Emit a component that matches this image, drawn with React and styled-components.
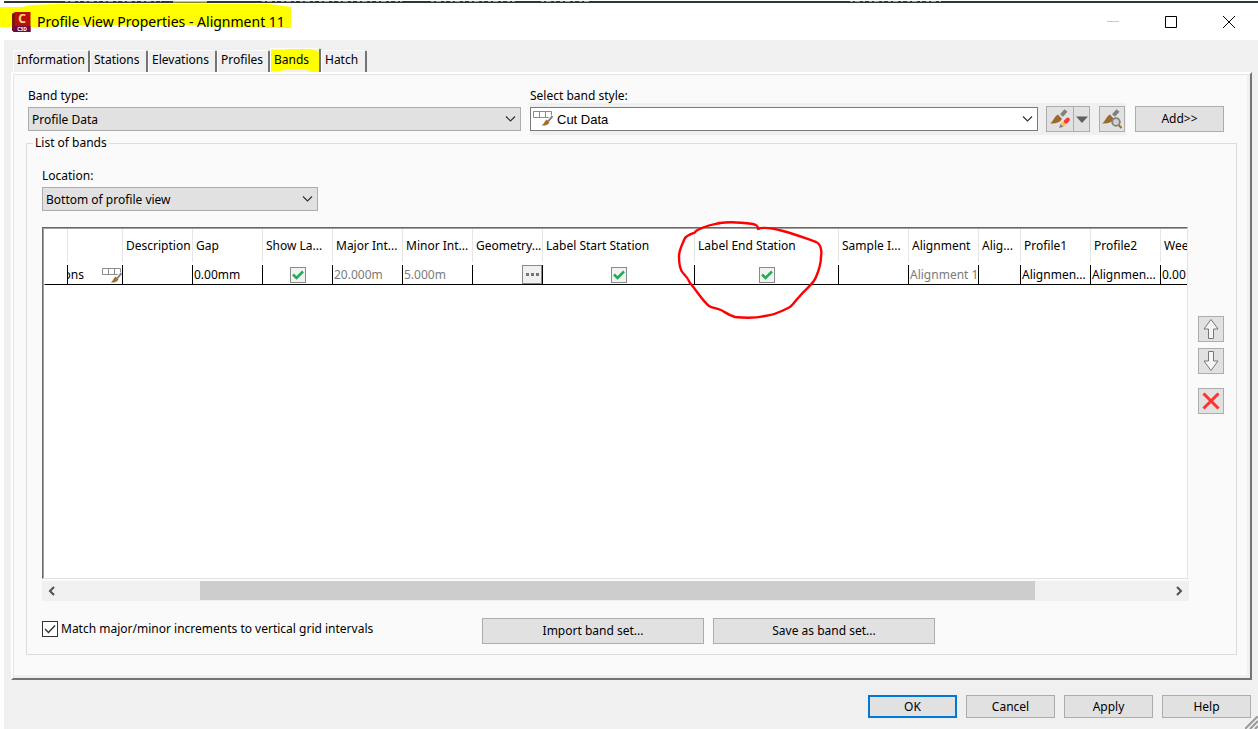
import { useState } from "react";
import styled, { createGlobalStyle } from "styled-components";

const GlobalStyle = createGlobalStyle`
  * {
    box-sizing: border-box;
  }

  body {
    margin: 0;
    background-color: #ffffff;
    color: #000000;
    font-family: "Noto Sans", "Open Sans", sans-serif;
    font-size: 12px;
    line-height: 16px;
  }

  button, select, input {
    font: inherit;
    color: inherit;
    margin: 0;
  }
`;

const Window = styled.div`
  min-height: 100vh;
  display: flex;
  flex-direction: column;
  padding: 1px 0 0 4px;
`;

const Backdrop = styled.svg`
  display: block;
  width: 100%;
  height: 2px;
  background-color: #2b3639;
`;

const TitleBar = styled.header`
  height: 37px;
  display: flex;
  align-items: center;
  position: relative;
  padding-left: 8px;
`;

const TitleMarker = styled.svg`
  position: absolute;
  left: -4px;
  top: 0;
`;

const TitleIcon = styled.svg`
  position: relative;
  margin-right: 6px;
  overflow: visible;
`;

const Title = styled.h1`
  position: relative;
  flex: 1;
  margin: 0;
  font-size: 14px;
  line-height: 20px;
  font-weight: 400;
`;

const CaptionButton = styled.button`
  width: 58px;
  height: 36px;
  padding: 0;
  border: none;
  background: none;
  display: flex;
  align-items: center;
  justify-content: center;
`;

const Body = styled.main`
  flex: 1;
  display: flex;
  flex-direction: column;
  padding: 8px 6px 0 7px;
  background-color: #f0f0f0;
`;

const Tabs = styled.div`
  display: flex;
  align-items: flex-end;
  height: 24px;
  padding-left: 2px;
`;

const Tab = styled.button`
  position: relative;
  width: ${({ $width }) => $width}px;
  height: ${({ $active }) => ($active ? 24 : 22)}px;
  padding: 0 0 ${({ $active }) => ($active ? 2 : 4)}px 3px;
  text-align: left;
  white-space: nowrap;
  background-color: #f0f0f0;
  border: 1px solid #ffffff;
  border-right: 2px solid #747474;
  border-bottom: none;
  border-radius: 2px 2px 0 0;
`;

const TabMarker = styled.svg`
  position: absolute;
  left: 0;
  top: 0;
`;

const TabText = styled.span`
  position: relative;
`;

const Panel = styled.section`
  flex: 1;
  display: flex;
  flex-direction: column;
  padding: 14px 13px 23px;
  background-color: #fafafa;
  border: 2px solid #ffffff;
  border-right-color: #747474;
  border-bottom-color: #747474;
  box-shadow: inset 1px 1px 0 #e6e6e6, inset -3px -3px 0 #f0f0f0;
`;

const FormRow = styled.div`
  display: flex;
  align-items: flex-end;
  gap: 9px;
  padding: 0 13px 0 2px;
`;

const Field = styled.div`
  flex: ${({ $grow }) => $grow || 0} 1 0;
  min-width: 0;
`;

const FieldLabel = styled.label`
  display: block;
  line-height: 15px;
`;

const Controls = styled.div`
  display: flex;
  align-items: center;
  height: 32px;
  padding-right: ${({ $shaded }) => ($shaded ? 1 : 0)}px;
  background-color: ${({ $shaded }) => ($shaded ? "#f0f0f0" : "transparent")};
`;

const Combo = styled.div`
  display: grid;
  flex: ${({ $width }) => ($width ? "none" : 1)};
  width: ${({ $width }) => ($width ? `${$width}px` : "auto")};
  min-width: 0;
  height: 24px;
  align-items: center;

  > * {
    grid-area: 1 / 1;
  }

  > svg {
    pointer-events: none;
  }
`;

const Select = styled.select`
  appearance: none;
  width: 100%;
  height: 24px;
  padding: 2px 24px 0 ${({ $icon }) => ($icon ? 26 : 3)}px;
  border: 1px solid ${({ $icon }) => ($icon ? "#7a7a7a" : "#adadad")};
  border-radius: 0;
  background-color: ${({ $icon }) => ($icon ? "#ffffff" : "#e1e1e1")};
  font-family: ${({ $icon }) => ($icon ? '"Liberation Sans", sans-serif' : "inherit")};
  font-size: ${({ $icon }) => ($icon ? 13 : 12)}px;
`;

const Chevron = styled.svg`
  justify-self: end;
  margin-right: 5px;
`;

const ComboIcon = styled.span`
  z-index: 1;
  display: flex;
  padding: 0 0 2px 3px;
  pointer-events: none;
`;

const Button = styled.button`
  width: ${({ $width }) => $width}px;
  height: ${({ $small }) => ($small ? 23 : 26)}px;
  padding: 0;
  border: ${({ $primary }) => ($primary ? "2px solid #0078d7" : "1px solid #adadad")};
  background-color: #e1e1e1;
  display: flex;
  align-items: center;
  justify-content: center;
`;

const SplitButton = styled.div`
  display: flex;
  margin: 0 9px 0 8px;

  button + button {
    border-left: none;
  }
`;

const Group = styled.fieldset`
  min-width: 0;
  margin: 0;
  padding: 17px 12px 10px 15px;
  border: 1px solid #dcdcdc;
`;

const Legend = styled.legend`
  margin-left: -9px;
  padding: 0 2px;
`;

const LocationField = styled.div`
  display: flex;
  flex-direction: column;
  gap: 3px;
  margin-bottom: 16px;
`;

const ListArea = styled.div`
  display: flex;
  gap: 9px;
`;

const ListColumn = styled.div`
  flex: 1;
  min-width: 0;
  display: flex;
  flex-direction: column;
  gap: 2px;
  position: relative;
`;

const ListBox = styled.div`
  min-height: 352px;
  margin-right: 1px;
  padding: 1px 0 0 1px;
  overflow: hidden;
  background-color: #ffffff;
  border: 1px solid #696969;
  border-right-color: #e3e3e3;
  border-bottom-color: #e3e3e3;
  box-shadow: inset 1px 1px 0 #a0a0a0;
`;

const Table = styled.table`
  table-layout: fixed;
  width: 1186px;
  border-spacing: 0;
`;

const HeadCell = styled.th`
  padding: 0 0 3px;
  font-weight: 400;
  text-align: left;
`;

const HeadText = styled.div`
  height: 33px;
  padding-left: 3px;
  line-height: 33px;
  white-space: nowrap;
  overflow: hidden;
  border-left: 1px solid ${({ $first }) => ($first ? "transparent" : "#e5e5e5")};
`;

const Cell = styled.td`
  height: 20px;
  padding: 0 0 0 ${({ $flush }) => ($flush ? 0 : 1)}px;
  overflow: hidden;
  white-space: nowrap;
  line-height: 19px;
  color: ${({ $muted }) => ($muted ? "#7b7b7b" : "#000000")};
  border-left: 1px solid ${({ $first }) => ($first ? "transparent" : "#000000")};
  border-bottom: 1px solid #000000;
`;

const CellFlex = styled.div`
  display: flex;
  align-items: center;
  justify-content: ${({ $justify }) => $justify};
  height: 19px;
`;

const ClippedText = styled.span`
  display: flex;
  justify-content: flex-end;
  width: 16px;
  overflow: hidden;
`;

const MoreButton = styled.button`
  width: 20px;
  height: 19px;
  padding: 0;
  display: flex;
  align-items: center;
  justify-content: center;
  border: 1px solid #8a8a8a;
  background-color: #f0f0f0;
`;

const Tick = styled.span`
  display: inline-grid;
  place-items: center;

  > * {
    grid-area: 1 / 1;
  }

  > svg {
    pointer-events: none;
    visibility: hidden;
  }

  > input:checked + svg {
    visibility: visible;
  }
`;

const TickInput = styled.input`
  appearance: none;
  width: 16px;
  height: 16px;
  border: 1px solid ${({ $green }) => ($green ? "#8a8a8a" : "#333333")};
  background-color: ${({ $green }) => ($green ? "#f2f2f2" : "#ffffff")};
`;

const RedCircle = styled.svg`
  position: absolute;
  left: 634px;
  top: -9px;
  pointer-events: none;
`;

const Scrollbar = styled.div`
  display: flex;
  height: 20px;
  background-color: #f0f0f0;
`;

const ScrollButton = styled.button`
  width: 19px;
  padding: 0;
  border: none;
  background: none;
  display: flex;
  align-items: center;
  justify-content: center;
`;

const ScrollPart = styled.div`
  flex: ${({ $grow }) => $grow};
  height: 19px;
  background-color: ${({ $thumb }) => ($thumb ? "#cdcdcd" : "transparent")};
`;

const SideButtons = styled.div`
  display: flex;
  flex-direction: column;
  gap: 6px;
  padding-top: 89px;

  button:last-child {
    margin-top: 8px;
  }
`;

const GroupFooter = styled.div`
  display: flex;
  gap: 9px;
  margin-top: 17px;
`;

const CheckLabel = styled.label`
  width: 431px;
  height: 22px;
  display: flex;
  align-items: center;
  gap: 3px;
`;

const Footer = styled.footer`
  position: relative;
  display: flex;
  justify-content: flex-end;
  gap: 9px;
  padding: 15px 1px 11px 0;
`;

const Grip = styled.svg`
  position: absolute;
  right: -6px;
  bottom: 0;
`;

const ChevronIcon = () => (
  <Chevron width="11" height="8" viewBox="0 0 11 8" fill="none" stroke="#333" strokeWidth="1.2">
    <path d="M1 1.500 5.500 6 10 1.500" />
  </Chevron>
);

const BandIcon = () => (
  <svg width="20" height="16" viewBox="0 0 20 16" fill="none">
    <path d="M.5 1.500h18v6H.5zM6.500 1.500v6M12.500 1.500v6" stroke="#8c8c8c" />
    <path d="M19.500 6 15.500 11" stroke="#fff" strokeWidth="4" />
    <path d="M19.500 6 15.500 11" stroke="#7d7d7d" strokeWidth="2" />
    <path d="M13.500 9.500 16.500 12C15.500 15 12 16 8.500 15.500 11 14.500 11.500 11 13.500 9.500Z" fill="#a0702c" />
  </svg>
);

const Brush = () => (
  <>
    <path d="M16 1.500 11.500 6.500" stroke="#808080" strokeWidth="4" />
    <path d="M8 5.500 12 10C9.500 14 5 15 0 14.500 3.500 12.500 3.500 8 8 5.500Z" fill="#9b6a2c" />
  </>
);

const EditBrushIcon = () => (
  <svg width="20" height="20" viewBox="0 0 20 20" fill="none">
    <Brush />
    <path d="m12 16.500 5-5" stroke="#ffc04a" strokeWidth="4" />
    <path d="m16 12.500 1.800-1.800" stroke="#f33" strokeWidth="4" strokeLinecap="round" />
    <path d="m10.500 15 2.800 2.800L9 19Z" fill="#808080" />
  </svg>
);

const FindBrushIcon = () => (
  <svg width="20" height="20" viewBox="0 0 20 20" fill="none">
    <Brush />
    <path d="m16.500 16 3 3" stroke="#a0702c" strokeWidth="2" />
    <circle cx="14" cy="13" r="3.800" fill="#d2d2d2" stroke="#808080" strokeWidth="1.800" />
  </svg>
);

const ArrowIcon = ({ down }) => (
  <svg width="18" height="22" viewBox="0 0 18 22" fill="#f5f5f5" stroke="#777">
    <path
      d={down
        ? "M6.500 1.500h5v9.500h4.500L9 20.500 2 11h4.500Z"
        : "M6.500 20.500h5V11h4.500L9 1.500 2 11h4.500Z"}
    />
  </svg>
);

const AppIcon = () => (
  <TitleIcon width="19" height="20" viewBox="0 0 19 20">
    <path d="M0 2 3 0h15.500v20H2L0 18Z" fill="#b80f0a" />
    <path d="M0 2 3 1v19H2L0 18Z" fill="#82100c" />
    <path d="M2 14h16.500v6H2L0 18Z" fill="#6b0a46" />
    <text x="10" y="11" textAnchor="middle" fontSize="12" fontWeight="700" fill="#ffe36a">C</text>
    <text x="10" y="19" textAnchor="middle" fontSize="5" fontWeight="700" fill="#fff">C3D</text>
  </TitleIcon>
);

const GreenTick = ({ label }) => (
  <CellFlex $justify="center">
    <Tick>
      <TickInput $green type="checkbox" defaultChecked aria-label={label} />
      <svg width="12" height="10" viewBox="0 0 12 10" fill="none" stroke="#1eae54" strokeWidth="2.500">
        <path d="m1 4.500 3.500 3.500L11 1.500" />
      </svg>
    </Tick>
  </CellFlex>
);

const tabs = [
  { name: "Information", width: 77 },
  { name: "Stations", width: 58 },
  { name: "Elevations", width: 69 },
  { name: "Profiles", width: 53 },
  { name: "Bands", width: 51 },
  { name: "Hatch", width: 46 },
];

const columns = [
  { name: "", width: 23 },
  { name: "", width: 55 },
  { name: "Description", width: 70 },
  { name: "Gap", width: 70 },
  { name: "Show La...", width: 70 },
  { name: "Major Int...", width: 70 },
  { name: "Minor Int...", width: 70 },
  { name: "Geometry...", width: 70 },
  { name: "Label Start Station", width: 152 },
  { name: "Label End Station", width: 144 },
  { name: "Sample I...", width: 70 },
  { name: "Alignment", width: 70 },
  { name: "Alig...", width: 42 },
  { name: "Profile1", width: 70 },
  { name: "Profile2", width: 70 },
  { name: "Wee", width: 70 },
];

const BandTable = () => (
  <Table>
    <colgroup>
      {columns.map((column, i) => (
        <col key={i} width={column.width} />
      ))}
    </colgroup>
    <thead>
      <tr>
        {columns.map((column, i) => (
          <HeadCell key={i}>
            <HeadText $first={i === 0}>{column.name}</HeadText>
          </HeadCell>
        ))}
      </tr>
    </thead>
    <tbody>
      <tr>
        <Cell $first />
        <Cell $flush>
          <CellFlex $justify="space-between">
            <ClippedText>ons</ClippedText>
            <BandIcon />
          </CellFlex>
        </Cell>
        <Cell />
        <Cell>0.00mm</Cell>
        <Cell><GreenTick label="Show labels" /></Cell>
        <Cell $muted>20.000m</Cell>
        <Cell $muted>5.000m</Cell>
        <Cell>
          <CellFlex $justify="flex-end">
            <MoreButton aria-label="Geometry points">
              <svg width="13" height="3" viewBox="0 0 13 3" fill="#777">
                <path d="M0 0h3v3H0zM5 0h3v3H5zM10 0h3v3h-3z" />
              </svg>
            </MoreButton>
          </CellFlex>
        </Cell>
        <Cell><GreenTick label="Label start station" /></Cell>
        <Cell><GreenTick label="Label end station" /></Cell>
        <Cell />
        <Cell $muted>Alignment 1</Cell>
        <Cell />
        <Cell>Alignmen...</Cell>
        <Cell>Alignmen...</Cell>
        <Cell>0.00</Cell>
      </tr>
    </tbody>
  </Table>
);

const App = () => {
  const [active, setActive] = useState("Bands");

  return (
    <Window>
      <GlobalStyle />
      <Backdrop aria-hidden="true">
        <path
          d="M61 .5h96M258 .5h140M427 .5h84M537 .5h51M846 .5h92"
          stroke="#9aa1a3"
          strokeDasharray="3 2 5 3 2 4"
        />
        <path d="M169 0h34" stroke="#d8d800" strokeWidth="3" />
      </Backdrop>
      <TitleBar>
        <TitleMarker width="292" height="26" viewBox="0 0 292 26" fill="#ffff00">
          <path d="M0 4 22 4 30 2 55 1 270 1 291 4V25H262L255 24 230 25 190 22 62 22 50 24H0Z" />
        </TitleMarker>
        <AppIcon />
        <Title>Profile View Properties - Alignment 11</Title>
        <CaptionButton aria-label="Minimize">
          <svg width="12" height="12" viewBox="0 0 12 12" stroke="#c8c8c8">
            <path d="M0 5.500h12" />
          </svg>
        </CaptionButton>
        <CaptionButton aria-label="Maximize">
          <svg width="12" height="12" viewBox="0 0 12 12" fill="none" stroke="#000">
            <path d="M.5.5h11v11H.5z" />
          </svg>
        </CaptionButton>
        <CaptionButton aria-label="Close">
          <svg width="12" height="12" viewBox="0 0 12 12" stroke="#000">
            <path d="m0 0 12 12M12 0 0 12" />
          </svg>
        </CaptionButton>
      </TitleBar>
      <Body>
        <Tabs role="tablist">
          {tabs.map((tab) => (
            <Tab
              key={tab.name}
              role="tab"
              aria-selected={tab.name === active}
              $width={tab.width}
              $active={tab.name === active}
              onClick={() => setActive(tab.name)}
            >
              {tab.name === "Bands" && (
                <TabMarker width="48" height="24" viewBox="0 0 48 24" fill="#ffff00">
                  <path d="M0 1 14 1 18 0H38L42 1 48 2V23L40 23 36 21 26 20 14 21 10 22 0 22Z" />
                </TabMarker>
              )}
              <TabText>{tab.name}</TabText>
            </Tab>
          ))}
        </Tabs>
        <Panel>
          <FormRow>
            <Field $grow={493}>
              <FieldLabel htmlFor="band-type">Band type:</FieldLabel>
              <Controls>
                <Combo>
                  <Select id="band-type">
                    <option>Profile Data</option>
                  </Select>
                  <ChevronIcon />
                </Combo>
              </Controls>
            </Field>
            <Field $grow={596}>
              <FieldLabel htmlFor="band-style">Select band style:</FieldLabel>
              <Controls $shaded>
                <Combo>
                  <Select id="band-style" $icon>
                    <option>Cut Data</option>
                  </Select>
                  <ComboIcon><BandIcon /></ComboIcon>
                  <ChevronIcon />
                </Combo>
                <SplitButton>
                  <Button $width={28} aria-label="Edit style"><EditBrushIcon /></Button>
                  <Button $width={16} aria-label="Style options">
                    <svg width="12" height="7" viewBox="0 0 12 7" fill="#606060">
                      <path d="M0 .5h12L6 7Z" />
                    </svg>
                  </Button>
                </SplitButton>
                <Button $width={26} aria-label="Find style"><FindBrushIcon /></Button>
              </Controls>
            </Field>
            <Controls>
              <Button $width={89}>Add&gt;&gt;</Button>
            </Controls>
          </FormRow>
          <Group>
            <Legend>List of bands</Legend>
            <LocationField>
              <label htmlFor="location">Location:</label>
              <Combo $width={276}>
                <Select id="location">
                  <option>Bottom of profile view</option>
                </Select>
                <ChevronIcon />
              </Combo>
            </LocationField>
            <ListArea>
              <ListColumn>
                <ListBox>
                  <BandTable />
                </ListBox>
                <Scrollbar>
                  <ScrollButton aria-label="Scroll left">
                    <svg width="7" height="10" viewBox="0 0 7 10" fill="none" stroke="#505050" strokeWidth="2">
                      <path d="M6 1 2 5l4 4" />
                    </svg>
                  </ScrollButton>
                  <ScrollPart $grow={139} />
                  <ScrollPart $grow={835} $thumb />
                  <ScrollPart $grow={135} />
                  <ScrollButton aria-label="Scroll right">
                    <svg width="7" height="10" viewBox="0 0 7 10" fill="none" stroke="#505050" strokeWidth="2">
                      <path d="m1 1 4 4-4 4" />
                    </svg>
                  </ScrollButton>
                </Scrollbar>
                <RedCircle width="150" height="104" viewBox="676 218 150 104" fill="none" stroke="#ff0000" strokeWidth="2.400" strokeLinejoin="round">
                  <path d="M695 232C702 226 711 225 720 223 732 221 746 223 753 224 757 225 758 226 758 229 762 227 772 228 783 231 795 234 807 239 816 242 821 244 822 251 821 257 821 264 819 270 816 277 813 285 806 288 799 297 796 300 794 304 790 307 782 311 775 315 765 316 756 318 745 318 735 317 728 315 725 312 721 310 716 308 712 308 709 306 702 300 697 291 690 283 688 278 685 275 683 273 680 270 679 262 679 256 679 250 683 243 685 238 687 235 691 234 696 232" />
                </RedCircle>
              </ListColumn>
              <SideButtons>
                <Button $width={26} aria-label="Move up"><ArrowIcon /></Button>
                <Button $width={26} aria-label="Move down"><ArrowIcon down /></Button>
                <Button $width={26} aria-label="Delete band">
                  <svg width="18" height="18" viewBox="0 0 18 18" fill="none" stroke="#ff3232" strokeWidth="3">
                    <path d="m1.500 1.500 15 15M16.500 1.500l-15 15" />
                  </svg>
                </Button>
              </SideButtons>
            </ListArea>
            <GroupFooter>
              <CheckLabel>
                <Tick>
                  <TickInput type="checkbox" defaultChecked />
                  <svg width="12" height="10" viewBox="0 0 12 10" fill="none" stroke="#333" strokeWidth="1.400">
                    <path d="M1 5 4.500 8.500 11 1.500" />
                  </svg>
                </Tick>
                Match major/minor increments to vertical grid intervals
              </CheckLabel>
              <Button $width={222}>Import band set...</Button>
              <Button $width={222}>Save as band set...</Button>
            </GroupFooter>
          </Group>
        </Panel>
        <Footer>
          <Button $small $primary $width={89}>OK</Button>
          <Button $small $width={89}>Cancel</Button>
          <Button $small $width={89}>Apply</Button>
          <Button $small $width={89}>Help</Button>
          <Grip width="13" height="13" viewBox="0 0 13 13" stroke="#9a9a9a" strokeWidth="2">
            <path d="M0 13 13 0M5 13l8-8M10 13l3-3" />
          </Grip>
        </Footer>
      </Body>
    </Window>
  );
};

export default App;
